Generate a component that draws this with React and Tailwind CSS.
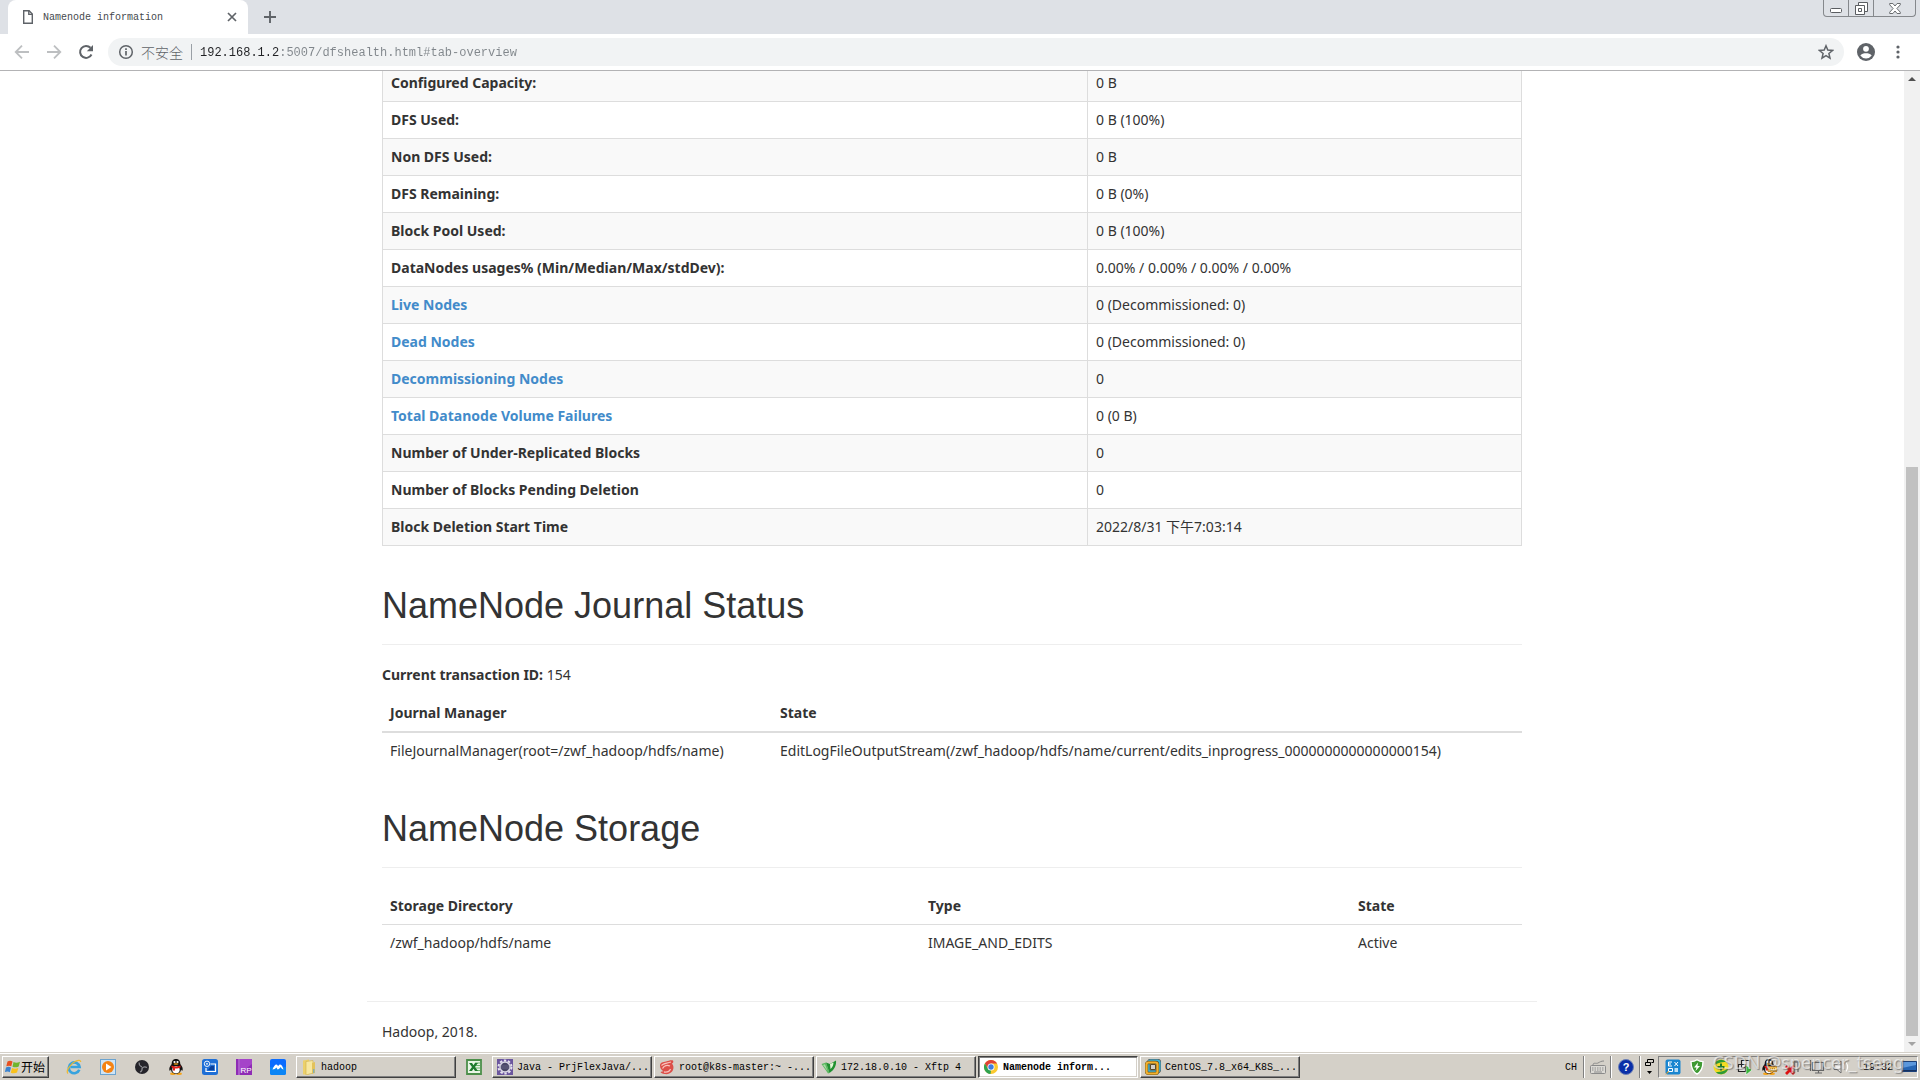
const overview = [
  { label: "Configured Capacity:", value: "0 B" },
  { label: "DFS Used:", value: "0 B (100%)" },
  { label: "Non DFS Used:", value: "0 B" },
  { label: "DFS Remaining:", value: "0 B (0%)" },
  { label: "Block Pool Used:", value: "0 B (100%)" },
  { label: "DataNodes usages% (Min/Median/Max/stdDev):", value: "0.00% / 0.00% / 0.00% / 0.00%" },
  { label: "Live Nodes", value: "0 (Decommissioned: 0)", href: "#tab-datanode" },
  { label: "Dead Nodes", value: "0 (Decommissioned: 0)", href: "#tab-datanode" },
  { label: "Decommissioning Nodes", value: "0", href: "#tab-datanode" },
  { label: "Total Datanode Volume Failures", value: "0 (0 B)", href: "#tab-datanode-volume-failures" },
  { label: "Number of Under-Replicated Blocks", value: "0" },
  { label: "Number of Blocks Pending Deletion", value: "0" },
  { label: "Block Deletion Start Time", value: "2022/8/31 下午7:03:14" },
];

const windows = [
  { title: "Java - PrjFlexJava/...", icon: EclipseIcon },
  { title: "root@k8s-master:~ -...", icon: ShellIcon },
  { title: "172.18.0.10 - Xftp 4", icon: XftpIcon },
  { title: "Namenode inform...", icon: ChromeIcon, active: true },
  { title: "CentOS_7.8_x64_K8S_...", icon: VmwareIcon },
];

const quickLaunch = [
  { name: "Internet Explorer", icon: IeIcon },
  { name: "Media Player", icon: PlayerIcon },
  { name: "OBS Studio", icon: ObsIcon },
  { name: "QQ", icon: PenguinIcon },
  { name: "Remote Desktop", icon: RemoteIcon },
  { name: "Axure RP", icon: AxureIcon },
  { name: "Meeting", icon: MeetingIcon },
];

const trayIcons = [
  { name: "Input tool", icon: InputToolIcon },
  { name: "Shield", icon: ShieldIcon },
  { name: "Security", icon: SafeIcon },
  { name: "Virtual machine", icon: VmTrayIcon },
  { name: "QQ message", icon: QqTrayIcon },
  { name: "Disconnected", icon: OfflineIcon },
  { name: "Network", icon: NetworkIcon },
  { name: "Volume", icon: VolumeIcon },
];

export default function App() {
  return (
    <div className="flex h-screen flex-col overflow-hidden bg-white">
      <TabStrip />
      <Toolbar />
      <div className="flex min-h-0 flex-1">
        <Page />
        <Scrollbar />
      </div>
      <Taskbar />
    </div>
  );
}

function TabStrip() {
  return (
    <header className="flex h-[34px] shrink-0 items-center bg-[#dee1e6] pl-2">
      <div className="flex h-full w-60 items-center rounded-t-lg bg-white pr-2 pl-[15px]">
        <svg viewBox="0 0 10 14" className="h-3.5 w-2.5" fill="none" stroke="#5f6368" strokeWidth="1.4">
          <path d="M.7.7h5.4l3.2 3.4v9.2H.7z" />
          <path d="M5.8.7v3.7h3.5" />
        </svg>
        <span className="ml-2.5 flex-1 font-['Liberation_Mono',monospace] text-[10px] text-[#45494d]">
          Namenode information
        </span>
        <button aria-label="Close tab" className="flex size-4 items-center justify-center">
          <svg viewBox="0 0 10 10" className="size-2.5" stroke="#5f6368" strokeWidth="1.7">
            <path d="M1 1l8 8M9 1l-8 8" />
          </svg>
        </button>
      </div>
      <button aria-label="New tab" className="ml-4 flex size-3 items-center justify-center">
        <svg viewBox="0 0 12 12" className="size-3" stroke="#5f6368" strokeWidth="1.9">
          <path d="M6 0v12M0 6h12" />
        </svg>
      </button>
      <WindowControls />
    </header>
  );
}

function WindowControls() {
  return (
    <div className="mr-1 ml-auto flex h-[17px] self-start rounded-b-[4px] border border-t-0 border-[#85888c]">
      <button aria-label="Minimize" className="flex w-[25px] items-center justify-center border-r border-[#85888c]">
        <svg viewBox="0 0 13 12" className="mt-1 h-3 w-[13px]">
          <rect x=".5" y="4.5" width="11" height="4" rx="1" fill="#fff" stroke="#5a5d61" />
        </svg>
      </button>
      <button aria-label="Restore" className="flex w-[25px] items-center justify-center border-r border-[#85888c]">
        <svg viewBox="0 0 13 13" className="size-[13px]" fill="#fff" stroke="#5a5d61">
          <path d="M3.5.5h9v9h-9z" />
          <path d="M.5 3.5h9v9h-9z" />
          <path d="M3.5 6.5h3v3h-3z" />
        </svg>
      </button>
      <button aria-label="Close" className="flex w-[41px] items-center justify-center">
        <svg viewBox="0 0 12 11" className="h-[11px] w-3" fill="#fff" stroke="#5a5d61" strokeWidth=".9">
          <path d="M.7.5h3.2L6 3 8.1.5h3.2v1.3L7.9 5.5l3.4 3.7v1.3H8.1L6 8l-2.1 2.5H.7V9.200l3.400-3.700L.7 1.800z" />
        </svg>
      </button>
    </div>
  );
}

function Toolbar() {
  return (
    <nav className="flex h-[37px] shrink-0 items-center border-b border-[#b3b3b5] pl-3.5">
      <button aria-label="Back" className="size-4">
        <svg viewBox="0 0 16 16" fill="none" stroke="#bdbfc1" strokeWidth="1.8">
          <path d="M15 8H2M8 1.700L1.700 8 8 14.300" />
        </svg>
      </button>
      <button aria-label="Forward" className="ml-4 size-4">
        <svg viewBox="0 0 16 16" fill="none" stroke="#bdbfc1" strokeWidth="1.8">
          <path d="M1 8h13M8 1.700L14.300 8 8 14.300" />
        </svg>
      </button>
      <button aria-label="Reload" className="ml-4 size-4">
        <svg viewBox="0 0 16 16">
          <path d="M13.500 10.500a6 6 0 1 1-1-6.700" fill="none" stroke="#5f6368" strokeWidth="2" />
          <path d="M15 1v6.200H8.800z" fill="#5f6368" />
        </svg>
      </button>
      <div className="ml-3.5 flex h-7 flex-1 items-center rounded-full bg-[#f1f3f4] pr-2.5 pl-2.5">
        <svg viewBox="0 0 16 16" className="size-4" fill="none" stroke="#5f6368">
          <circle cx="8" cy="8" r="6.300" strokeWidth="1.500" />
          <path d="M8 7v4.500M8 4.300v1.600" strokeWidth="1.700" />
        </svg>
        <span className="ml-[7px] font-['Noto_Sans_CJK_SC',sans-serif] text-sm leading-5 font-light text-[#5f6368]">不安全</span>
        <span className="ml-2 h-4 w-px bg-[#9aa0a6]" />
        <input
          aria-label="Address"
          defaultValue="192.168.1.2:5007/dfshealth.html#tab-overview"
          className="ml-2 min-w-0 flex-1 bg-[linear-gradient(90deg,#202124_79px,#80868b_79px)] bg-clip-text pt-0.5 font-['Liberation_Mono',monospace] text-xs text-transparent outline-none"
        />
        <button aria-label="Bookmark this page" className="size-4">
          <svg viewBox="0 0 16 16" fill="none" stroke="#5f6368" strokeWidth="1.500">
            <path d="M8 1.800l1.800 4.300 4.700.4-3.600 3 1.100 4.600L8 11.700l-4 2.400 1.100-4.600-3.600-3 4.700-.4z" />
          </svg>
        </button>
      </div>
      <button aria-label="Profile" className="ml-3 size-5">
        <svg viewBox="0 0 20 20">
          <circle cx="10" cy="10" r="9" fill="#5f6368" />
          <circle cx="10" cy="6.800" r="2.900" fill="#fff" />
          <path d="M4.300 13.600c1-2 3.600-2.400 5.700-2.400s4.700.4 5.700 2.400A6.900 6.900 0 0 1 10 16.500a6.900 6.900 0 0 1-5.700-2.900z" fill="#fff" />
        </svg>
      </button>
      <button aria-label="Menu" className="mr-3.5 ml-3.5 size-4">
        <svg viewBox="0 0 16 16" fill="#5f6368">
          <circle cx="8" cy="3" r="1.600" />
          <circle cx="8" cy="8" r="1.600" />
          <circle cx="8" cy="13" r="1.600" />
        </svg>
      </button>
    </nav>
  );
}

// The view rests at the end of the page, so the first row is cut by the toolbar.
function Page() {
  return (
    <main className="flex min-w-0 flex-1 flex-col justify-end overflow-hidden font-['Noto_Sans','Noto_Sans_CJK_SC',sans-serif] text-sm leading-5 text-[#333]">
      <div className="mx-auto w-full max-w-[1170px] shrink-0">
        <div className="px-[15px]">
          <OverviewTable />
          <PageHeader>NameNode Journal Status</PageHeader>
          <p className="mb-2.5">
            <b>Current transaction ID:</b> 154
          </p>
          <JournalTable />
          <PageHeader>NameNode Storage</PageHeader>
          <StorageTable />
        </div>
        <footer className="mt-10 border-t border-[#eee] px-[15px] pt-5 pb-2.5">
          <p>Hadoop, 2018.</p>
        </footer>
      </div>
    </main>
  );
}

function PageHeader({ children }) {
  return (
    <div className="mt-10 mb-5 border-b border-[#eee] pb-[19px]">
      <h1 className="font-['Liberation_Sans',sans-serif] text-4xl leading-[39px]">{children}</h1>
    </div>
  );
}

function OverviewTable() {
  return (
    <table className="w-full border-collapse border border-[#ddd] text-left">
      <tbody>
        {overview.map((row) => (
          <tr key={row.label} className="odd:bg-[#f9f9f9]">
            <th scope="row" className="w-[705px] border border-[#ddd] p-2">
              {row.href ? (
                <a href={row.href} className="text-[#428bca]">
                  {row.label}
                </a>
              ) : (
                row.label
              )}
            </th>
            <td className="border border-[#ddd] p-2">{row.value}</td>
          </tr>
        ))}
      </tbody>
    </table>
  );
}

function JournalTable() {
  return (
    <table className="w-full border-separate border-spacing-0 text-left">
      <thead>
        <tr>
          <th className="w-[390px] border-b-2 border-[#ddd] p-2">Journal Manager</th>
          <th className="border-b-2 border-[#ddd] p-2">State</th>
        </tr>
      </thead>
      <tbody>
        <tr>
          <td className="p-2">FileJournalManager(root=/zwf_hadoop/hdfs/name)</td>
          <td className="p-2">
            EditLogFileOutputStream(/zwf_hadoop/hdfs/name/current/edits_inprogress_0000000000000000154)
          </td>
        </tr>
      </tbody>
    </table>
  );
}

function StorageTable() {
  return (
    <table className="w-full border-separate border-spacing-0 text-left">
      <thead>
        <tr>
          <th className="w-[538px] border-b border-[#ddd] p-2">Storage Directory</th>
          <th className="w-[430px] border-b border-[#ddd] p-2">Type</th>
          <th className="border-b border-[#ddd] p-2">State</th>
        </tr>
      </thead>
      <tbody>
        <tr>
          <td className="p-2">/zwf_hadoop/hdfs/name</td>
          <td className="p-2">IMAGE_AND_EDITS</td>
          <td className="p-2">Active</td>
        </tr>
      </tbody>
    </table>
  );
}

function Scrollbar() {
  return (
    <div className="flex w-4 shrink-0 flex-col bg-[#f1f1f1]">
      <div className="flex h-4 items-center justify-center">
        <svg viewBox="0 0 8 4" className="h-1 w-2">
          <path d="M0 4l4-4 4 4z" fill="#505050" />
        </svg>
      </div>
      <div className="flex flex-1 flex-col justify-end px-0.5">
        <div className="h-3/5 bg-[#c1c1c1]" />
      </div>
      <div className="flex h-4 items-center justify-center">
        <svg viewBox="0 0 8 4" className="h-1 w-2">
          <path d="M0 0l4 4 4-4z" fill="#a3a3a3" />
        </svg>
      </div>
    </div>
  );
}

function Taskbar() {
  return (
    <div className="relative shrink-0 border-t border-[#d4d0c8] bg-[#d4d0c8]">
      <div className="flex h-[27px] items-center border-t border-white pr-0.5 pl-0.5 font-['Liberation_Mono','Noto_Sans_CJK_SC',monospace] text-[10px] text-black">
        <button className="flex h-[22px] w-[47px] items-center border border-t-white border-r-[#404040] border-b-[#404040] border-l-white pl-0.5 font-['Noto_Sans_CJK_SC',sans-serif] text-xs leading-4 shadow-[inset_-1px_-1px_0_#808080]">
          <WindowsIcon />
          开始
        </button>
        <div className="ml-[17px] flex gap-[18px]">
          {quickLaunch.map(({ name, icon: Icon }) => (
            <button key={name} aria-label={name} className="size-4">
              <Icon />
            </button>
          ))}
        </div>
        <div className="ml-2.5 flex items-center gap-2.5">
          <TaskButton title="hadoop" icon={FolderIcon} />
          <button aria-label="Excel" className="size-4">
            <ExcelIcon />
          </button>
          <div className="flex gap-0.5">
            {windows.map((w) => (
              <TaskButton key={w.title} {...w} />
            ))}
          </div>
        </div>
        <Tray />
      </div>
      <p className="pointer-events-none absolute right-4 bottom-1.5 font-['Noto_Sans',sans-serif] text-lg leading-6 text-white/60 [text-shadow:1px_1px_1px_#55555599]">
        CSDN @spencer_tseng
      </p>
    </div>
  );
}

function TaskButton({ title, icon: Icon, active }) {
  return (
    <button
      className={
        active
          ? "flex h-[22px] w-40 items-center gap-1 border border-t-[#404040] border-r-white border-b-white border-l-[#404040] bg-white pl-1 font-bold whitespace-nowrap shadow-[inset_1px_1px_0_#808080,inset_-1px_-1px_0_#d4d0c8]"
          : "flex h-[22px] w-40 items-center gap-1 border border-t-white border-r-[#404040] border-b-[#404040] border-l-white pl-1 whitespace-nowrap shadow-[inset_-1px_-1px_0_#808080]"
      }
    >
      <span className="size-4">
        <Icon />
      </span>
      {title}
    </button>
  );
}

function Tray() {
  return (
    <div className="ml-auto flex items-center">
      <span className="mr-[7px]">CH</span>
      <div className="flex h-[22px] w-[27px] items-center justify-center border-l border-white shadow-[-1px_0_0_#808080]">
        <KeyboardIcon />
      </div>
      <div className="flex h-[22px] w-[29px] items-center justify-center border-l border-white shadow-[-1px_0_0_#808080]">
        <HelpIcon />
      </div>
      <div className="flex h-[22px] w-[18px] items-center justify-center border-l border-white shadow-[-1px_0_0_#808080]">
        <svg viewBox="0 0 9 16" className="h-4 w-[9px]">
          <path d="M2.500 3.500v-3h6v3h-2M.5 3.500h5v3h-5z" fill="none" stroke="#000" />
          <path d="M2 12h5l-2.500 3z" fill="#000" />
        </svg>
      </div>
      <div className="flex h-[22px] items-center border border-t-[#808080] border-r-white border-b-white border-l-[#808080] pl-1.5">
        <div className="flex gap-2">
          {trayIcons.map(({ name, icon: Icon }) => (
            <button key={name} aria-label={name} className="size-4">
              <Icon />
            </button>
          ))}
        </div>
        <time className="ml-3.5 w-8">19:32</time>
        <button aria-label="Show desktop" className="ml-1.5 size-4">
          <DesktopIcon />
        </button>
      </div>
    </div>
  );
}

function WindowsIcon() {
  return (
    <svg viewBox="0 0 16 16" className="size-4 shrink-0">
      <path d="M2.500 2.500c2-1 3.500-.8 5 0L6.300 7.300c-1.500-.9-3-.9-5 0z" fill="#e8501f" />
      <path d="M8.500 3c2 1 4 1 6.500-.3l-1.300 4.800c-2 1-4 1.200-6.200.3z" fill="#6fb52c" />
      <path d="M1 8.500c2-1 3.500-.8 5 0l-1.200 4.700c-1.500-.9-3-.9-5 0z" fill="#3a83d0" />
      <path d="M7 9c2 1 4 1 6.300 0L12 13.500c-2 1-4 1-6.200.2z" fill="#f9c11c" />
    </svg>
  );
}

function IeIcon() {
  return (
    <svg viewBox="0 0 16 16">
      <path d="M13.300 10.800A5.400 5.400 0 1 1 13.600 8H4.500" fill="none" stroke="#38a3de" strokeWidth="2.600" />
      <path d="M2 14.500C-.5 12.500 4 5 9.500 2.300c3-1.500 5.300-1.200 5.200.7" fill="none" stroke="#f0b92d" strokeWidth="1.200" />
    </svg>
  );
}

function PlayerIcon() {
  return (
    <svg viewBox="0 0 16 16">
      <rect x=".5" y=".5" width="15" height="15" fill="#cfe4f5" stroke="#6ba3cf" />
      <circle cx="8" cy="8" r="6" fill="#f58313" />
      <path d="M6 4.500L11.500 8 6 11.500z" fill="#fff" />
    </svg>
  );
}

function ObsIcon() {
  return (
    <svg viewBox="0 0 16 16">
      <circle cx="8" cy="8" r="7" fill="#25242a" />
      <g fill="none" stroke="#8f8f94" strokeWidth="1.200">
        <path d="M5.300 3.500c-.5 2.200.7 3.600 2.700 4.200" />
        <path d="M13 8.500c-2-1-3.800-.6-5 .8" />
        <path d="M6 13c1.800-.7 2.400-2.300 2-4.500" />
      </g>
    </svg>
  );
}

function PenguinIcon() {
  return (
    <svg viewBox="0 0 16 16">
      <ellipse cx="5" cy="14.700" rx="3" ry="1.300" fill="#f5a318" />
      <ellipse cx="11" cy="14.700" rx="3" ry="1.300" fill="#f5a318" />
      <path d="M8 0c3.200 0 4.300 2.300 4.300 5 1.800 2.200 3 4.600 2.200 6.500-.5.700-1.500-1-1.500-1 0 2.600-2 4.300-5 4.300s-5-1.700-5-4.300c0 0-1 1.700-1.500 1C.7 9.600 1.900 7.200 3.700 5 3.700 2.300 4.800 0 8 0z" fill="#111" />
      <ellipse cx="8" cy="10.800" rx="3.700" ry="3.500" fill="#fff" />
      <circle cx="6.500" cy="3" r="1.100" fill="#fff" />
      <circle cx="9.500" cy="3" r="1.100" fill="#fff" />
      <ellipse cx="8" cy="5" rx="2.500" ry=".8" fill="#f5a318" />
      <path d="M3.500 6.500c3 1.500 6 1.500 9 0v2c-2 1-4 1.200-5.500 1v2H5V9l-1.500-.8z" fill="#e3201b" />
    </svg>
  );
}

function RemoteIcon() {
  return (
    <svg viewBox="0 0 16 16">
      <rect width="16" height="16" rx="2.500" fill="#1f6fd6" />
      <path d="M8.500 5h5v7.500H4V9" fill="none" stroke="#fff" strokeWidth="1.200" />
      <path d="M6 11h6V7H9" fill="#0b3f99" />
      <circle cx="5" cy="4.800" r="2.700" fill="none" stroke="#fff" strokeWidth=".9" />
      <circle cx="5" cy="4.800" r=".9" fill="#fff" />
    </svg>
  );
}

function AxureIcon() {
  return (
    <svg viewBox="0 0 16 16">
      <path d="M0 0h16v16H0z" fill="#8e2cb5" />
      <path d="M4 0h12v5L4 14z" fill="#a544c9" />
      <path d="M3 0v16" stroke="#c78be0" />
      <text x="4.500" y="14" fontSize="8" fontFamily="Liberation Sans" fill="#fff">
        RP
      </text>
    </svg>
  );
}

function MeetingIcon() {
  return (
    <svg viewBox="0 0 16 16">
      <rect width="16" height="16" rx="2" fill="#0a6cff" />
      <path d="M0 8h16v6a2 2 0 0 1-2 2H2a2 2 0 0 1-2-2z" fill="#0b85f5" />
      <path d="M2.500 10.500c1-3 2.500-5 4-5 .8 0 1 .8 1.500 1.800.7-1.200 1.500-1.800 2.200-1.800 1.500 0 2.600 2.500 3.300 5-1.200 0-2-1-3-2.500-.8 1.500-1.700 2.500-3 2.500l-1-2c-1 1.300-2.500 2-4 2z" fill="#fff" />
    </svg>
  );
}

function FolderIcon() {
  return (
    <svg viewBox="0 0 16 16">
      <path d="M2 1.500l6-1v15H2z" fill="#ecd06a" />
      <path d="M5 2.500l7-1V14l-7 2z" fill="#f7e7a0" stroke="#cfae4a" strokeWidth=".6" />
      <path d="M11 4l3-1v11l-3 1z" fill="#e3c25a" />
      <path d="M12.300 10h1v4h-1z" fill="#5aa6dc" />
    </svg>
  );
}

function ExcelIcon() {
  return (
    <svg viewBox="0 0 16 16">
      <path d="M1 1h14v14H1z" fill="#e9f5e6" stroke="#4c8f4a" strokeWidth="1.800" />
      <path d="M9 4h5M9 6.500h5M9 9h5M9 11.500h5" stroke="#6db56d" />
      <path d="M3 4h3l1.500 2.300L9 4h3L9 8l3 4H9L7.500 9.700 6 12H3l3-4z" fill="#1d7a2d" />
    </svg>
  );
}

function EclipseIcon() {
  return (
    <svg viewBox="0 0 16 16">
      <path d="M0 0h16v16H0z" fill="#6b569e" />
      <circle cx="8" cy="8" r="6.500" fill="none" stroke="#e6e3ee" strokeWidth="2" strokeDasharray="2.400 1.700" />
      <circle cx="8" cy="8" r="5" fill="#4a4868" stroke="#dcdae6" strokeWidth="1.500" />
      <path d="M3.500 7h9M3.500 9h9" stroke="#6c6a88" strokeWidth=".8" />
    </svg>
  );
}

function ShellIcon() {
  return (
    <svg viewBox="0 0 16 16">
      <path d="M1 6.500C1 3.500 4 3 7 2.500 10 2 11 1 14 1.500c.8 1.500 0 2.500-1 3 1.800 2 2 5 .5 7.500-1.500 2.500-5 3.500-8 3-2-.3-3.500-1-4-2 1-.7 2-.8 3-.8C2.500 11 1 9.500 1 6.500z" fill="#dc4f48" />
      <path d="M2.500 6.500c1.500-2.500 5-2 9.500-3.500M3.500 9.500C5 6.500 8.500 6 11 7M5 13c3 .5 5.500-.5 6.500-3" fill="none" stroke="#f9c2bc" strokeWidth="1.300" />
    </svg>
  );
}

function XftpIcon() {
  return (
    <svg viewBox="0 0 16 16">
      <path d="M.5 5L5 3.500 8.500 14 7 14.500z" fill="#5cb860" />
      <path d="M5 3.500l4 1.500 6-3.500c.5 4-1 9-6.500 12.500z" fill="#1f9130" />
      <path d="M9 5l3.500-1.500c0 2.500-.8 4.500-3 6.500z" fill="#e2f6d6" />
      <path d="M2 6l2-.7L6.500 12z" fill="#a8dca5" />
    </svg>
  );
}

function ChromeIcon() {
  return (
    <svg viewBox="0 0 16 16">
      <circle cx="8" cy="8" r="7" fill="#fbc92f" />
      <path d="M8 1a7 7 0 0 1 6.100 3.500H8L5 9.700 1.900 4.500A7 7 0 0 1 8 1z" fill="#e04236" />
      <path d="M1.900 4.500L5 9.800 8 11.500 7.500 15A7 7 0 0 1 1.900 4.500z" fill="#2fa24f" />
      <circle cx="8" cy="8" r="3.500" fill="#fff" />
      <circle cx="8" cy="8" r="2.700" fill="#3f7de0" />
    </svg>
  );
}

function VmwareIcon() {
  return (
    <svg viewBox="0 0 16 16" fill="none">
      <rect x="3.500" y="1.500" width="11" height="11" rx="2" stroke="#555" strokeWidth="3.400" />
      <rect x="3.500" y="1.500" width="11" height="11" rx="2" stroke="#3bb4d8" strokeWidth="2.200" />
      <rect x="1.500" y="3.500" width="11" height="11" rx="2" stroke="#6b5420" strokeWidth="3.400" />
      <rect x="1.500" y="3.500" width="11" height="11" rx="2" stroke="#f4b22d" strokeWidth="2.200" />
      <path d="M5.500 5.500h5v5h-5z" stroke="#5a4a28" />
    </svg>
  );
}

function KeyboardIcon() {
  return (
    <svg viewBox="0 0 16 14" className="h-3.5 w-4" fill="none" stroke="#8a8a8a">
      <path d="M3 5c0-3 3-1 5-2s3-2 6-2" />
      <rect x=".5" y="5.500" width="15" height="8" rx="1" fill="#dcdad5" />
      <path d="M2 8h12M2 10h12" strokeDasharray="1.500 1" />
      <path d="M4 12h8" />
    </svg>
  );
}

function HelpIcon() {
  return (
    <svg viewBox="0 0 16 16" className="size-4">
      <circle cx="8" cy="8" r="7.500" fill="#0a2fa8" stroke="#6b7fb5" />
      <text x="8" y="12" textAnchor="middle" fontSize="11" fontWeight="700" fontFamily="Liberation Sans" fill="#fff">
        ?
      </text>
    </svg>
  );
}

function InputToolIcon() {
  return (
    <svg viewBox="0 0 16 16">
      <rect width="15" height="15" x=".5" y=".5" rx="2" fill="#1a86d0" />
      <path d="M7 3H3.500v4H7M3.500 5H6M9.500 3l3.500 4M13 3L9.500 7M3.500 9.500h4v3h-4z" fill="none" stroke="#fff" />
      <path d="M9.500 9h3.500v4H9.500z" fill="#bfe1f7" />
      <path d="M0 16l3-4 1 1z" fill="#f0a020" />
    </svg>
  );
}

function ShieldIcon() {
  return (
    <svg viewBox="0 0 16 16">
      <path d="M8 .8c2 1.400 4 1.800 6 1.800 0 6-1.500 10-6 12.600C3.500 12.600 2 8.600 2 2.600c2 0 4-.4 6-1.800z" fill="#3f9a34" stroke="#fff" strokeWidth="1.400" />
      <path d="M9 3.500L5 8.500h2.500L6.500 12 11 7H8.500z" fill="#fff" />
    </svg>
  );
}

function SafeIcon() {
  return (
    <svg viewBox="0 0 16 16">
      <circle cx="8" cy="8" r="7.500" fill="#f3dc24" />
      <path d="M1 6A7.300 7.300 0 0 1 13.500 3.200C10.500 2.500 6 3.500 1 6zM15 10A7.300 7.300 0 0 1 2.500 12.800C5.500 13.500 10 12.500 15 10z" fill="#2d9a35" />
      <path d="M8 4.500v7M4.500 8h7" stroke="#1f7a28" strokeWidth="2" />
    </svg>
  );
}

function VmTrayIcon() {
  return (
    <svg viewBox="0 0 16 16">
      <path d="M4.500 1.500h8v7h-8zM1.500 5.500h7v7h-7z" fill="#e6e6e6" stroke="#222" strokeWidth="1.200" />
      <path d="M9 6l6 5-6 5z" fill="#3bb53b" stroke="#fff" strokeWidth=".6" />
    </svg>
  );
}

function QqTrayIcon() {
  return (
    <svg viewBox="0 0 16 16">
      <PenguinIcon />
      <path d="M7 7.500h9v5h-4l-2 2.500v-2.500H7z" fill="#f9c34a" stroke="#b56f12" strokeWidth=".7" />
      <path d="M9 10h5" stroke="#7a4a08" strokeDasharray="1 1" />
    </svg>
  );
}

function OfflineIcon() {
  return (
    <svg viewBox="0 0 16 16">
      <path d="M9.500 1v13M13 3v10M7 3h8" stroke="#777" strokeWidth="1.500" />
      <path d="M1 7l8 8M9 7l-8 8" stroke="#dd1111" strokeWidth="2.800" />
    </svg>
  );
}

function NetworkIcon() {
  return (
    <svg viewBox="0 0 16 16">
      <path d="M3.500 3.500h11v8h-11z" fill="#cfcfcf" stroke="#666" strokeWidth="1.200" />
      <path d="M6 14h7M9.500 11.500V14M1.500 1v11" fill="none" stroke="#666" strokeWidth="1.200" />
    </svg>
  );
}

function VolumeIcon() {
  return (
    <svg viewBox="0 0 16 16">
      <path d="M1 5.500h3L8 2v12l-4-3.500H1z" fill="#f2f2f2" stroke="#6d6d6d" />
      <path d="M10.500 5c1.200 1.800 1.200 4.200 0 6M13 3.500c2 2.800 2 6.200 0 9" fill="none" stroke="#fff" strokeWidth="1.200" />
    </svg>
  );
}

function DesktopIcon() {
  return (
    <svg viewBox="0 0 16 16">
      <path d="M.5 2.500h15v10H.5z" fill="#2565b5" stroke="#1b3f78" />
      <path d="M1 3h14v3L1 9z" fill="#5b97dd" />
      <path d="M1 11.500h14" stroke="#16315e" />
    </svg>
  );
}
